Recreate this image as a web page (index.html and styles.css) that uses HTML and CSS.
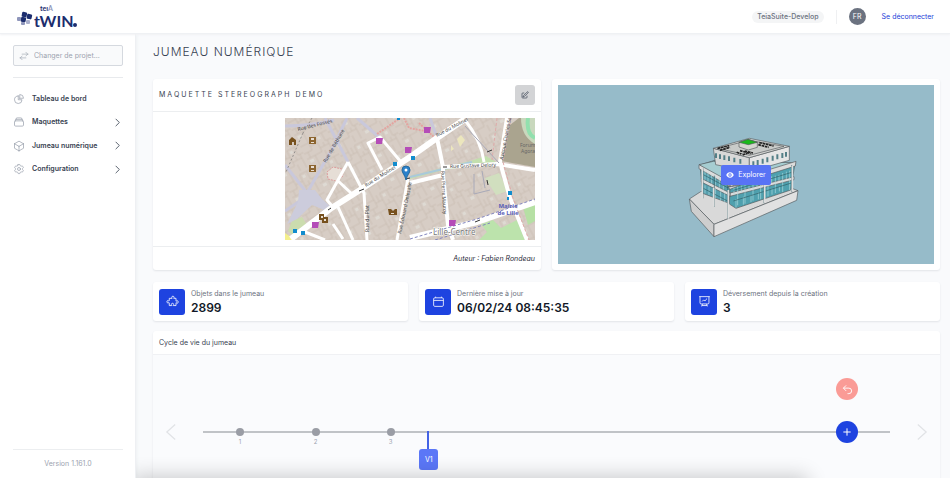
FILE: index.html
```html
<!DOCTYPE html>
<html lang="fr">
<head>
<meta charset="utf-8">
<meta name="viewport" content="width=device-width, initial-scale=1">
<title>Jumeau numérique</title>
<link rel="stylesheet" href="styles.css">
</head>
<body>
<header class="topbar">
  <a class="logo" href="#" aria-label="teia tWIN">
    <svg width="64" height="26" viewBox="0 0 64 26">
      <g fill="#1c2d6e">
        <rect x="6" y="8" width="5" height="5" rx="1" transform="rotate(12 8 10)"/>
        <rect x="11" y="10" width="5" height="5" rx="1" transform="rotate(12 13 12)"/>
        <rect x="5" y="13" width="5" height="5" rx="1" transform="rotate(12 7 15)"/>
        <circle cx="59" cy="21" r="2"/>
      </g>
      <rect x="1" y="13" width="4" height="4" rx="1" fill="#8f96bb"/>
      <rect x="5" y="18" width="4" height="3" rx="1" fill="#8f96bb"/>
      <rect x="10" y="16" width="4" height="4" rx="1" fill="#a9afcc"/>
      <text class="logo-name" x="18" y="23">tWIN</text>
      <text class="logo-brand" x="24" y="7">teı<tspan fill="#8f96bb">A</tspan></text>
    </svg>
  </a>
  <div class="account">
    <span class="env">TeiaSuite-Develop</span>
    <span class="divider"></span>
    <span class="avatar">FR</span>
    <a class="logout" href="#">Se déconnecter</a>
  </div>
</header>
<div class="shell">
  <aside class="sidebar">
    <label class="project">
      <svg class="icon" viewBox="0 0 24 24"><path d="M7.500 21L3 16.500m0 0L7.500 12M3 16.500h13.500m0-13.500L21 7.500m0 0L16.500 12M21 7.500H7.500"/></svg>
      <input type="text" placeholder="Changer de projet..." aria-label="Changer de projet">
    </label>
    <nav class="menu">
      <a href="#"><svg class="icon" viewBox="0 0 24 24"><path d="M10.500 6a7.500 7.500 0 107.500 7.500h-7.500V6z"/><path d="M13.500 10.500H21A7.500 7.500 0 0013.500 3v7.500z"/></svg><span>Tableau de bord</span></a>
      <a href="#"><svg class="icon" viewBox="0 0 24 24"><path d="M6 6.900A2.200 2.200 0 016.800 6.700h10.500c.2 0 .5 0 .7.100M6 6.900A2.200 2.200 0 004.500 9v.8M6 6.900V6a2.200 2.200 0 012.200-2.200h7.500A2.200 2.200 0 0118 6v.9m0 0A2.200 2.200 0 0119.500 9v.8m0 0a2.200 2.200 0 00-.7-.1H5.200a2.200 2.200 0 00-.7.100m15 0a2.200 2.200 0 011.500 2.200v6a2.200 2.200 0 01-2.200 2.200H5.200A2.200 2.200 0 013 18v-6a2.200 2.200 0 011.500-2.200"/></svg><span>Maquettes</span><svg class="chevron" viewBox="0 0 24 24"><path d="M8 4l8 8-8 8"/></svg></a>
      <a href="#"><svg class="icon" viewBox="0 0 24 24"><path d="M21 7.500l-9-5.200-9 5.200m18 0l-9 5.200m9-5.200v9l-9 5.200M3 7.500l9 5.200M3 7.500v9l9 5.200m0-9v9"/></svg><span>Jumeau numérique</span><svg class="chevron" viewBox="0 0 24 24"><path d="M8 4l8 8-8 8"/></svg></a>
      <a href="#"><svg class="icon" viewBox="0 0 24 24"><path d="M9.600 3.900c.1-.5.600-.9 1.100-.9h2.600c.5 0 1 .4 1.100.9l.2 1.300c.1.400.3.700.6.900l.3.100c.3.200.7.300 1.100.1l1.200-.4c.5-.2 1.100 0 1.400.5l1.300 2.200c.3.500.2 1.100-.3 1.400l-1 .9c-.3.200-.4.600-.4 1v.3c0 .4.100.8.400 1l1 .8c.4.400.5 1 .3 1.500l-1.300 2.200c-.3.500-.9.700-1.400.5l-1.200-.5c-.4-.1-.8-.1-1.100.1l-.3.200c-.3.200-.5.500-.6.900l-.2 1.200c-.1.600-.6 1-1.100 1h-2.600c-.5 0-1-.4-1.100-1l-.2-1.200c-.1-.4-.3-.7-.6-.9l-.3-.2c-.3-.2-.7-.2-1.100-.1l-1.200.5c-.5.200-1.100 0-1.400-.5l-1.300-2.200c-.3-.5-.1-1.100.3-1.500l1-.8c.3-.2.400-.6.400-1v-.3c0-.4-.1-.8-.4-1l-1-.9c-.4-.3-.6-.9-.3-1.400l1.300-2.200c.3-.5.900-.7 1.400-.5l1.200.4c.4.200.8.100 1.100-.1l.3-.1c.3-.2.500-.5.600-.9l.2-1.300z"/><circle cx="12" cy="12" r="3"/></svg><span>Configuration</span><svg class="chevron" viewBox="0 0 24 24"><path d="M8 4l8 8-8 8"/></svg></a>
    </nav>
    <p class="version">Version 1.161.0</p>
  </aside>
  <main class="main">
    <h1>JUMEAU NUMÉRIQUE</h1>
    <div class="overview">
      <section class="card model">
        <header><h2>MAQUETTE STEREOGRAPH DEMO</h2>
          <button class="edit" aria-label="Modifier"><svg viewBox="0 0 24 24"><path d="M16.900 4.500l1.600-1.700a1.900 1.900 0 112.700 2.700L10.600 16.100a4.500 4.500 0 01-1.900 1.100L6 18l.8-2.700a4.500 4.500 0 011.100-1.900l9-8.900zM18 14v4.800A2.200 2.200 0 0115.800 21H5.200A2.200 2.200 0 013 18.800V8.200A2.200 2.200 0 015.200 6H10"/></svg></button>
        </header>
        <div class="map">
          <svg width="250" height="122" viewBox="0 0 250 122" role="img" aria-label="Plan de Lille-Centre">
            <defs>
              <pattern id="blocks" width="31" height="27" patternUnits="userSpaceOnUse" patternTransform="rotate(-28)">
                <rect width="31" height="27" fill="#d7cdc5"/>
                <path d="M0 6H9V0M9 6V14H0M9 10H17V3H25V12H31M17 10V20H9V27M17 16H27V12M27 16V27M0 20H9M20 20V27M4 14V20M25 3H31M13 3V10M22 12V16" fill="none" stroke="#c6b9af" stroke-width=".6"/>
                <path d="M19 5h3v3h-3zM2 22h4v3H2z" fill="#dedad3"/>
              </pattern>
            </defs>
            <rect width="250" height="122" fill="url(#blocks)"/>
            <path d="M225 7l9-7h16v49l-34-6z" fill="#aaa48f"/>
            <path d="M236 0h14v26q-14-8-14-26z" fill="#c9d8bd"/>
            <path d="M243 0q-2 16 7 20" fill="none" stroke="#92e0ae" stroke-width="4"/>
            <path d="M125 58l60-15 16-5 10 6-52 8-34 9z" fill="#c3dfae"/>
            <path d="M125 59l62-15" stroke="#a9c8db" stroke-width="2"/>
            <path d="M196 106l12-4 8 8 16-8 8 20h-46l8-8z" fill="#bce3ac"/>
            <path d="M238 89l12-4v18l-7 4z" fill="#b6e0a4"/>
            <path d="M7 103l10-4 5 8-13 11-6-5z" fill="#cbdcae"/>
            <path d="M0 115l10 7H0z" fill="#f4ef8c"/>
            <path d="M200 60l14-5 9 18-12 4z" fill="#d1dfbf"/>
            <path d="M172 21l4-4 4 5-5 7zM166 27l3 4-3 2z" fill="#ece6bd"/>
            <path d="M42 54l6-5 9 2 1 7-7 5-8-2z" fill="#e6ded6" stroke="#dc9c9c" stroke-dasharray="2 1"/>
            <path d="M0 47L22 75L48 29L62 0M0 8Q26 8 49 2M40 0L63 44M72 0L95 20M145 0L152 20M22 78L0 93M22 82L42 92" fill="none" stroke="#c9c8db" stroke-width="3"/>
            <path d="M14 72l16 0 7 9 8 7-5 4-13-5-15 14-10 5 11-22z" fill="#ccccdc"/>
            <path d="M18 15L1 54M27 0L18 15" stroke="#777" stroke-dasharray="2 2" stroke-width=".7"/>
            <path d="M92 16L108 5L115 0M119 0L124 10L140 13M134 5L150 20" fill="none" stroke="#e3a4a0" stroke-width="2" stroke-dasharray="2 1"/>
            <g fill="none" stroke="#fff" stroke-linejoin="round">
              <path d="M6 121L45 91L75 72L128 37L152 20L180 1" stroke-width="6"/>
              <path d="M63 44L42 82L47 88M63 44L79 75L82 122M52 62L66 75M97 52L83 25L95 19L116 44M53 89L68 122M123 60L112 122M15 112L40 122M48 106L58 121M180 2Q196 22 199 44" stroke-width="3"/>
              <path d="M152 20L158 49L158 57L163 107L168 122M125 65L158 57M158 49L212 46L250 52M222 0L215 44L225 80L242 122" stroke-width="4"/>
              <path d="M125 120L192 104L250 84" stroke-width="6"/>
            </g>
            <path d="M226 0L218 44L228 80L244 122M212 0L207 42" fill="none" stroke="#dfaaa9" stroke-dasharray="3 2"/>
            <path d="M125 121L192 101L250 81M150 122L205 105" fill="none" stroke="#8285be" stroke-dasharray="3 2"/>
            <path d="M189 56V76L205 72M197 53L200 70M180 8L214 45" fill="none" stroke="#a8a9b8"/>
            <path d="M74 73l5-2M43 92l3-2M121 61l4-1M202 34l5-2M202 62l1 5M190 104l5-2M158 49h4" stroke="#333"/>
            <g class="street">
              <text transform="translate(13 13) rotate(-14)">Rue des Fossés</text>
              <text transform="translate(41 45) rotate(-60)">Rue de Béthune</text>
              <text transform="translate(81 69) rotate(-32)">Rue du Molinel</text>
              <text transform="translate(152 19) rotate(-28)">Rue du Molinel</text>
              <text transform="translate(165 50) rotate(-2)">Rue Gustave Delory</text>
              <text transform="translate(116 116) rotate(-78)">Rue Édouard Delesalle</text>
              <text transform="translate(156 53) rotate(87)">Rue Pierre Mauroy</text>
              <text transform="translate(84 114) rotate(-90)">Rue du Plat</text>
              <text transform="translate(218 42) rotate(-79)">Avenue Charles Sa</text>
            </g>
            <g class="area"><text x="235" y="29">Forum</text><text x="236" y="35">Agora</text></g>
            <g class="station"><text x="223" y="90">Mairie</text><text x="223" y="97">de Lille</text></g>
            <text class="district" x="148" y="117">Lille-Centre</text>
            <path d="M108 44h4v4h-4zM126 38h4v4h-4zM8 111h4v4H8zM16 113h4v4h-4zM223 73h4v4h-4zM222 79h2v3h-2zM112 0h3v2h-3z" fill="#128ccd"/>
            <path d="M91 20h7l-1 6h-6zM120 29h7l-1 6h-6zM27 104h7l-1 6h-6zM139 9h7l-1 6h-6zM164 102h7l-1 6h-6z" fill="#b44cb8"/>
            <path d="M4 27v-5l3-3 4 3v5H9v-3H7v3zM34 96h5v3h4v6h-6v-3h-3zM103 91h3l2 2 2-2h2v6h-8z" fill="#77511e"/>
            <path d="M36 98h2v2h-2zM39 101h2v2h-2zM106 95h3v1h-3z" fill="#e9dfd4"/>
            <path d="M24 19h7v7h-7zM24 47h7v7h-7z" fill="#8c6530"/>
            <path d="M26 20h3v2h-3zM26 24h3v1h-3zM26 48h3v2h-3zM26 52h3v1h-3z" fill="#e9dfd4"/>
            <path d="M121 62C120 57 117 55 117 52a4 4 0 018 0c0 3-3 5-4 10z" fill="#2a81cb" stroke="#246a9f"/>
            <circle cx="121" cy="52" r="1.500" fill="#fff"/>
          </svg>
        </div>
        <footer>Auteur : Fabien Rondeau</footer>
      </section>
      <section class="card preview">
        <div class="scene">
          <svg class="building" viewBox="3 -78 390 423" aria-hidden="true">
            <g stroke="#555b5d" stroke-width="2" stroke-linejoin="round">
              <path d="M28 207L62 185L270 150L354 182L102 283z" fill="#d9d9d9"/>
              <path d="M28 207L102 283L102 320L34 244z" fill="#cecece"/>
              <path d="M102 283L354 182L350 211L102 320z" fill="#e1e1e1"/>
              <path d="M60 105L107 90L150 180L148 220L68 190z" fill="#569fae"/>
              <path d="M150 178L345 100L332 180L168 235L148 222z" fill="#4fa0ae"/>
              <path d="M57 104L100 94L348 98L150 168z" fill="#a6cdd1"/>
              <path d="M57 104L150 155L150 170L57 116zM150 155L348 94L346 108L150 170z" fill="#dcdcdc"/>
              <path d="M64 145L150 189V199L64 156zM150 189L342 140V149L150 199z" fill="#dcdcdc"/>
              <path d="M100 55L208 83V125L107 104z" fill="#d8d8d8"/>
              <path d="M208 83L328 49V91L208 125z" fill="#e5e5e5"/>
              <path d="M100 55L208 25L328 49L208 83z" fill="#d9d9d7"/>
              <path d="M112 55L207 31L312 49L208 76z" fill="#c9cbc9"/>
              <path d="M177 37L204 28L232 37V52L205 60L177 51z" fill="#d5d5d0"/>
              <path d="M177 37L204 28L232 37L205 44z" fill="#19b91a"/>
            </g>
            <path d="M113 55l34-8M120 61l30-9M238 38l43 10M235 44l31 8M170 67l14 5M180 62l32 9M194 63l25 6M188 75l13-5" stroke="#222" stroke-width="5" stroke-dasharray="8 2"/>
            <path d="M108 70v14M120 73v14M133 76v14M147 79v14M163 83v14M181 87v14M220 94v15M233 90v15M248 86v15M262 82v15M278 77v15M292 73v15M307 69v15M318 66v14" stroke="#547f87" stroke-width="6"/>
            <path d="M75 124v25M84 127v28M95 133v28M106 138v29M118 143v30M130 148v31M75 166v24M87 170v25M106 177v28M122 184v29M134 190v28M162 173v20M173 170v56M184 167v20M195 164v57M207 160v20M219 158v54M231 153v20M242 150v58M264 143v56M275 139v20M286 137v52M297 134v19M308 129v57M319 125v22M329 122v58M168 207v26M190 200v24M213 195v21M235 188v20M276 176v18M298 170v14" stroke="#aedbe0" stroke-width="2"/>
            <path d="M69 115v90M103 137v94M143 168v98M252 140v80M335 105v80M160 181l175-54M160 213l174-54M70 134l75 40M70 175l75 39" stroke="#315d65" stroke-width="2" fill="none"/>
            <path d="M67 115v91M101 174v56M145 180v86M254 140v78M337 107v76" stroke="#dedede" stroke-width="5"/>
          </svg>
          <button class="explore"><svg viewBox="0 0 24 24"><path d="M12 4C6 4 2 8 1 12c1 4 5 8 11 8s10-4 11-8c-1-4-5-8-11-8z" fill="#fff"/><circle cx="12" cy="12" r="5" fill="#5873f5"/><circle cx="12" cy="12" r="2.500" fill="#fff"/></svg>Explorer</button>
        </div>
      </section>
    </div>
    <div class="stats">
      <section class="card stat"><span class="badge"><svg viewBox="0 0 24 24"><path d="M14.200 6.100c0-.4.200-.7.400-1 .3-.3.400-.6.400-1 0-1-1-1.900-2.200-1.900s-2.300.8-2.300 1.900c0 .4.200.7.400 1 .2.300.4.600.4 1v.1H6v4.300c0 .3-.3.500-.6.500-.3 0-.6-.2-.9-.4-.3-.2-.7-.4-1-.4-1.100 0-1.900 1-1.900 2.300s.8 2.200 1.900 2.200c.3 0 .7-.1 1-.4.300-.2.600-.4.900-.4.300 0 .6.300.6.600v5h4.600v-.4c0-.3-.2-.6-.4-.9-.2-.3-.4-.6-.4-1 0-1 1-1.900 2.200-1.900s2.200.9 2.200 1.900c0 .4-.1.700-.4 1-.2.300-.4.600-.4.900v.4h5.100v-5.200h.4c.4 0 .7.200.9.400.3.300.6.400 1 .4 1 0 1.900-1 1.900-2.200s-.9-2.300-1.900-2.300c-.4 0-.7.200-1 .4-.3.200-.6.400-.9.400h-.4V6.200z"/></svg></span><div><p>Objets dans le jumeau</p><strong>2899</strong></div></section>
      <section class="card stat"><span class="badge"><svg viewBox="0 0 24 24"><path d="M6.700 3v2.200M17.300 3v2.200M3 18.800V7.500a2.200 2.200 0 012.200-2.300h13.600A2.200 2.200 0 0121 7.500v11.300A2.200 2.200 0 0118.800 21H5.200A2.200 2.200 0 013 18.800zM3 10h18"/></svg></span><div><p>Dernière mise à jour</p><strong>06/02/24 08:45:35</strong></div></section>
      <section class="card stat"><span class="badge"><svg viewBox="0 0 24 24"><path d="M3.700 3v11.200A2.200 2.200 0 006 16.500h12a2.200 2.200 0 002.200-2.300V3M2.200 3h19.600M8.200 16.500l-1.500 4.500M15.800 16.500l1.500 4.500M7.200 19.500h9.600M7.500 12l3-3 2.200 2.200a12 12 0 014-4.500"/></svg></span><div><p>Déversement depuis la création</p><strong>3</strong></div></section>
    </div>
    <section class="card cycle">
      <h2>Cycle de vie du jumeau</h2>
      <div class="timeline">
        <button class="step" aria-label="Précédent"><svg viewBox="0 0 24 24"><path d="M17 3L7 12l10 9"/></svg></button>
        <div class="track">
          <span class="dot" style="left:5.4%"><i></i>1</span>
          <span class="dot" style="left:16.4%"><i></i>2</span>
          <span class="dot" style="left:27.3%"><i></i>3</span>
          <button class="release" style="left:32.8%">V1</button>
          <button class="round undo" style="left:93.8%" aria-label="Annuler"><svg viewBox="0 0 24 24"><path d="M9 15L3 9m0 0l6-6M3 9h12a6 6 0 010 12h-3"/></svg></button>
          <button class="round add" style="left:93.8%" aria-label="Ajouter"><svg viewBox="0 0 24 24"><path d="M12 1v22M1 12h22"/></svg></button>
        </div>
        <button class="step" aria-label="Suivant"><svg viewBox="0 0 24 24"><path d="M7 3l10 9-10 9"/></svg></button>
      </div>
    </section>
  </main>
</div>
</body>
</html>
```
FILE: styles.css
```css
* { box-sizing: border-box; }
body {
  margin: 0;
  height: 100vh;
  display: flex;
  flex-direction: column;
  overflow: hidden;
  background: #f9fafc;
  color: #374151;
  font: 7px/12px Inter, sans-serif;
}
h1, h2, p { margin: 0; font-weight: 400; }
h2 { font-size: 7px; }
button { padding: 0; border: 0; font: inherit; color: inherit; cursor: pointer; }
a { color: inherit; text-decoration: none; }
svg { display: block; flex: none; fill: none; }

.topbar {
  flex: none;
  height: 34px;
  display: flex;
  align-items: center;
  justify-content: space-between;
  padding: 0 16px;
  background: #fff;
  border-bottom: 1px solid #eff1f4;
  box-shadow: 0 1px 2px #f0f1f4;
  z-index: 1;
}
.logo-name { font: 700 16px Lato, sans-serif; fill: #1c2d6e; }
.logo-brand { font: 700 7px Lato, sans-serif; fill: #1c2d6e; }
.account { display: flex; align-items: center; }
.env {
  padding: 0 5px;
  border-radius: 6px;
  background: #f4f5f6;
  color: #6b7280;
  font-weight: 500;
}
.divider { width: 1px; height: 14px; margin: 0 12px; background: #eff0f2; }
.avatar {
  display: grid;
  place-items: center;
  width: 17px;
  height: 17px;
  margin-right: 16px;
  border-radius: 50%;
  background: #6b7280;
  color: #fff;
}
.logout { color: #1d40d8; }

.shell { flex: 1; min-height: 0; display: flex; }
.sidebar {
  flex: none;
  width: 136px;
  padding: 11px 12px 0 13px;
  display: flex;
  flex-direction: column;
  background: #fff;
  border-right: 1px solid #eef0f3;
  box-shadow: 1px 0 3px #edf1f3;
}
.project {
  height: 21px;
  display: flex;
  align-items: center;
  gap: 5px;
  padding: 0 5px;
  border: 1px solid #d5d9df;
  border-radius: 2px;
  background: #f9fafb;
}
.project input {
  flex: 1;
  min-width: 0;
  padding: 0;
  border: 0;
  background: none;
  font: inherit;
}
.project input::placeholder { color: #9ca3af; opacity: 1; }
.icon { width: 12px; height: 12px; stroke: #9ca3af; stroke-width: 1.500; stroke-linecap: round; stroke-linejoin: round; }
.project .icon { width: 10px; height: 10px; }
.chevron { width: 11px; height: 11px; margin-left: auto; stroke: #4b5563; stroke-width: 2; }
.menu {
  display: grid;
  grid-auto-rows: 1fr;
  height: 104px;
  margin-top: 11px;
  padding-top: 9px;
  border-top: 1px solid #e8eaed;
}
.menu a { display: flex; align-items: center; gap: 7px; font-weight: 600; white-space: nowrap; }
.version {
  margin-top: auto;
  padding: 8px 0;
  border-top: 1px solid #eceef0;
  color: #9ca3af;
  text-align: center;
}

.main {
  position: relative;
  flex: 1;
  min-width: 0;
  padding: 8px 10px 0 17px;
  overflow: hidden;
}
.main::after {
  content: "";
  position: absolute;
  inset: 100% 146px auto 0;
  height: 20px;
  box-shadow: 0 2px 20px 4px #0003;
  pointer-events: none;
}
h1 { font-size: 12px; line-height: 20px; font-weight: 300; letter-spacing: 1px; }
.card { background: #fff; border-radius: 3px; box-shadow: 0 1px 2px #e2e4e8; }
.overview { display: grid; grid-template-columns: 1fr 1fr; gap: 11px; margin-top: 17px; }
.model header {
  display: flex;
  align-items: center;
  justify-content: space-between;
  height: 32px;
  padding: 0 6px;
}
.model h2 { letter-spacing: 2px; }
.edit {
  display: grid;
  place-items: center;
  width: 20px;
  height: 20px;
  border-radius: 3px;
  background: #d3d4d6;
}
.edit svg { width: 8px; stroke: #374151; stroke-width: 2; }
.map { padding: 6px; border: solid #eceef0; border-width: 1px 0; }
.map svg { margin-left: auto; }
.street { font: 5px "Noto Sans", sans-serif; fill: #454545; }
.area { font: 5px "Noto Sans", sans-serif; fill: #666; }
.station { font: 700 6px "Noto Sans", sans-serif; fill: #5960b8; text-anchor: middle; }
.district { font: 8px "Noto Sans", sans-serif; fill: #777; stroke: #fff; stroke-width: 1px; paint-order: stroke; }
.model footer { padding: 6px 6px 5px; font-style: italic; text-align: right; color: #1f2937; }
.preview { display: grid; padding: 6px; }
.scene { display: grid; place-items: center; background: #96bbc9; }
.scene > * { grid-area: 1 / 1; }
.building { width: 130px; height: 141px; }
.explore {
  z-index: 1;
  display: flex;
  align-items: center;
  gap: 4px;
  padding: 4px 5px;
  border-radius: 2px;
  background: #5873f5;
  color: #fff;
}
.explore svg { width: 8px; }

.stats { display: grid; grid-template-columns: repeat(3, 1fr); gap: 11px; margin: 12px 0 10px; }
.stat { display: flex; align-items: center; gap: 6px; padding: 6px; height: 39px; }
.badge {
  display: grid;
  place-items: center;
  width: 26px;
  height: 26px;
  border-radius: 3px;
  background: #1e43e0;
}
.badge svg { width: 13px; stroke: #fff; stroke-width: 1.500; stroke-linejoin: round; }
.stat p { color: #6b7280; }
.stat strong { display: block; color: #111827; font-size: 12px; line-height: 16px; font-weight: 600; }

.cycle h2 { padding: 6px 6px 5px; border-bottom: 1px solid #f0f1f4; }
.timeline { display: flex; align-items: center; gap: 22px; height: 154px; padding: 0 8px; background: #fafbfd; }
.step { width: 20px; background: none; }
.step svg { width: 20px; height: 20px; stroke: #e1e3e6; stroke-width: 1.500; }
.track { position: relative; flex: 1; height: 2px; background: #c0c3c7; }
.dot { position: absolute; top: -3px; width: 8px; margin-left: -4px; text-align: center; color: #9ca3af; font-size: 6px; }
.dot i { display: block; height: 8px; border-radius: 50%; background: #9a9da5; }
.release {
  position: absolute;
  top: 18px;
  width: 19px;
  height: 21px;
  margin-left: -9px;
  border-radius: 3px;
  background: #5b77f7;
  color: #fff;
}
.release::before { content: ""; position: absolute; left: 8px; bottom: 100%; width: 2px; height: 18px; background: #4463e5; }
.round {
  position: absolute;
  display: grid;
  place-items: center;
  width: 22px;
  height: 22px;
  margin-left: -11px;
  border-radius: 50%;
}
.round svg { width: 11px; stroke: #fff; stroke-width: 2; }
.add { top: -10px; background: #1e43e0; }
.add svg { width: 8px; stroke-width: 3; }
.undo { top: -53px; background: #fa9b96; }
```
